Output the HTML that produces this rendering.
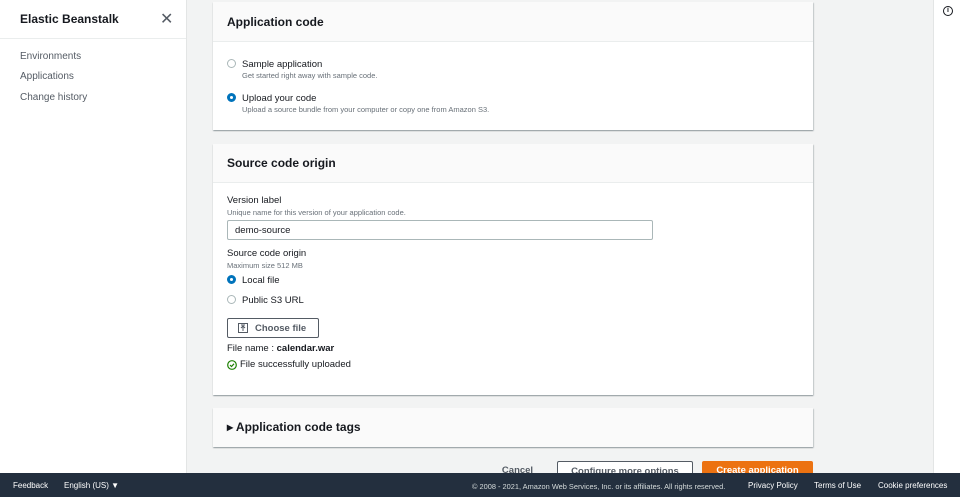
<!DOCTYPE html>
<html><head><style>
*{box-sizing:border-box;margin:0;padding:0}
body{width:960px;height:497px;overflow:hidden;background:#f2f3f3;font-family:"Liberation Sans",sans-serif;color:#16191f;position:relative;font-size:9px}
.side{position:absolute;left:0;top:0;width:187px;height:497px;background:#fff;border-right:1px solid #e3e5e5}
.side h1{position:absolute;left:20px;top:12px;font-size:12px;font-weight:bold}
.side .x{position:absolute;left:160px;top:9px;font-size:16px;color:#545b64}
.side .hr{position:absolute;left:0;top:38px;width:186px;border-top:1px solid #eaeded}
.side a{position:absolute;left:20px;font-size:10px;color:#545b64}
.right{position:absolute;left:933px;top:0;width:27px;height:497px;background:#fff;border-left:1px solid #e3e5e5}
.info{position:absolute;left:9px;top:6px;width:10px;height:10px;border:1px solid #16191f;border-radius:50%;font-size:7px;text-align:center;line-height:8px;font-weight:bold}
.card{position:absolute;left:213px;width:600px;background:#fff;box-shadow:0 1px 1px rgba(0,28,36,.3),1px 1px 1px rgba(0,28,36,.15)}
.hd{background:#fafafa;border-bottom:1px solid #eaeded;font-weight:bold;font-size:12px;padding-left:14px}
.t{position:absolute;font-size:9.5px}
.s{position:absolute;font-size:7.5px;color:#687078}
.r{position:absolute;width:9px;height:9px;border-radius:50%;border:1px solid #aab7b8;background:#fff}
.r.on{border:3px solid #0073bb}
.foot{position:absolute;left:0;top:473px;width:960px;height:24px;background:#232f3e;color:#d5dbdb;font-size:8px}
.foot span{position:absolute;top:8px}
.btn{position:absolute;top:461px;height:24px;font-weight:bold;font-size:9.5px;text-align:center;line-height:20px}
</style></head><body>
<div class="side">
<h1>Elastic Beanstalk</h1><div class="x">✕</div><div class="hr"></div>
<a style="top:51px">Environments</a><a style="top:71px">Applications</a><a style="top:92px">Change history</a>
</div>
<div class="right"><div class="info">i</div></div>

<div class="card" style="top:2px;height:128px">
<div class="hd" style="height:40px;line-height:40px">Application code</div>
<div class="r" style="left:14px;top:57px"></div>
<div class="t" style="left:29px;top:57px">Sample application</div>
<div class="s" style="left:29px;top:69px">Get started right away with sample code.</div>
<div class="r on" style="left:14px;top:91px"></div>
<div class="t" style="left:29px;top:91px">Upload your code</div>
<div class="s" style="left:29px;top:103px">Upload a source bundle from your computer or copy one from Amazon S3.</div>
</div>

<div class="card" style="top:144px;height:251px">
<div class="hd" style="height:39px;line-height:39px">Source code origin</div>
<div class="t" style="left:14px;top:51px">Version label</div>
<div class="s" style="left:14px;top:64px">Unique name for this version of your application code.</div>
<div style="position:absolute;left:14px;top:76px;width:426px;height:20px;border:1px solid #aab7b8;border-radius:2px;font-size:9.5px;padding:4px 0 0 7px">demo-source</div>
<div class="t" style="left:14px;top:104px">Source code origin</div>
<div class="s" style="left:14px;top:117px">Maximum size 512 MB</div>
<div class="r on" style="left:14px;top:131px"></div>
<div class="t" style="left:29px;top:131px">Local file</div>
<div class="r" style="left:14px;top:151px"></div>
<div class="t" style="left:29px;top:151px">Public S3 URL</div>
<div style="position:absolute;left:14px;top:174px;width:92px;height:20px;border:1px solid #545b64;border-radius:2px;font-weight:bold;font-size:9.5px;color:#545b64;padding:4px 0 0 27px">Choose file
<svg style="position:absolute;left:10px;top:4px" width="10" height="10" viewBox="0 0 10 10"><rect x=".5" y=".5" width="9" height="9" fill="none" stroke="#545b64"/><path d="M5 8V3M3 5l2-2 2 2M3 2h4" fill="none" stroke="#545b64"/></svg></div>
<div class="t" style="left:14px;top:199px">File name : <b>calendar.war</b></div>
<svg style="position:absolute;left:14px;top:216px" width="10" height="10" viewBox="0 0 10 10"><circle cx="5" cy="5" r="4.3" fill="none" stroke="#1d8102" stroke-width="1.2"/><path d="M3 5l1.5 1.5L7 3.8" fill="none" stroke="#1d8102" stroke-width="1.2"/></svg>
<div class="t" style="left:27px;top:215px">File successfully uploaded</div>
</div>

<div class="card" style="top:408px;height:39px;background:#fafafa">
<div style="position:absolute;left:14px;top:12px;font-weight:bold;font-size:12px">▸ Application code tags</div>
</div>

<div class="btn" style="left:495px;width:45px;color:#545b64">Cancel</div>
<div class="btn" style="left:557px;width:136px;border:1px solid #545b64;background:#fff;border-radius:2px;color:#545b64">Configure more options</div>
<div class="btn" style="left:702px;width:111px;background:#ec7211;border-radius:2px;color:#fff">Create application</div>

<div class="foot">
<span style="left:13px;color:#fff">Feedback</span>
<span style="left:64px;color:#fff">English (US) ▼</span>
<span style="left:472px;font-size:7.4px;top:9px">© 2008 - 2021, Amazon Web Services, Inc. or its affiliates. All rights reserved.</span>
<span style="left:748px;color:#fff">Privacy Policy</span>
<span style="left:814px;color:#fff">Terms of Use</span>
<span style="left:878px;color:#fff">Cookie preferences</span>
</div>
</body></html>
